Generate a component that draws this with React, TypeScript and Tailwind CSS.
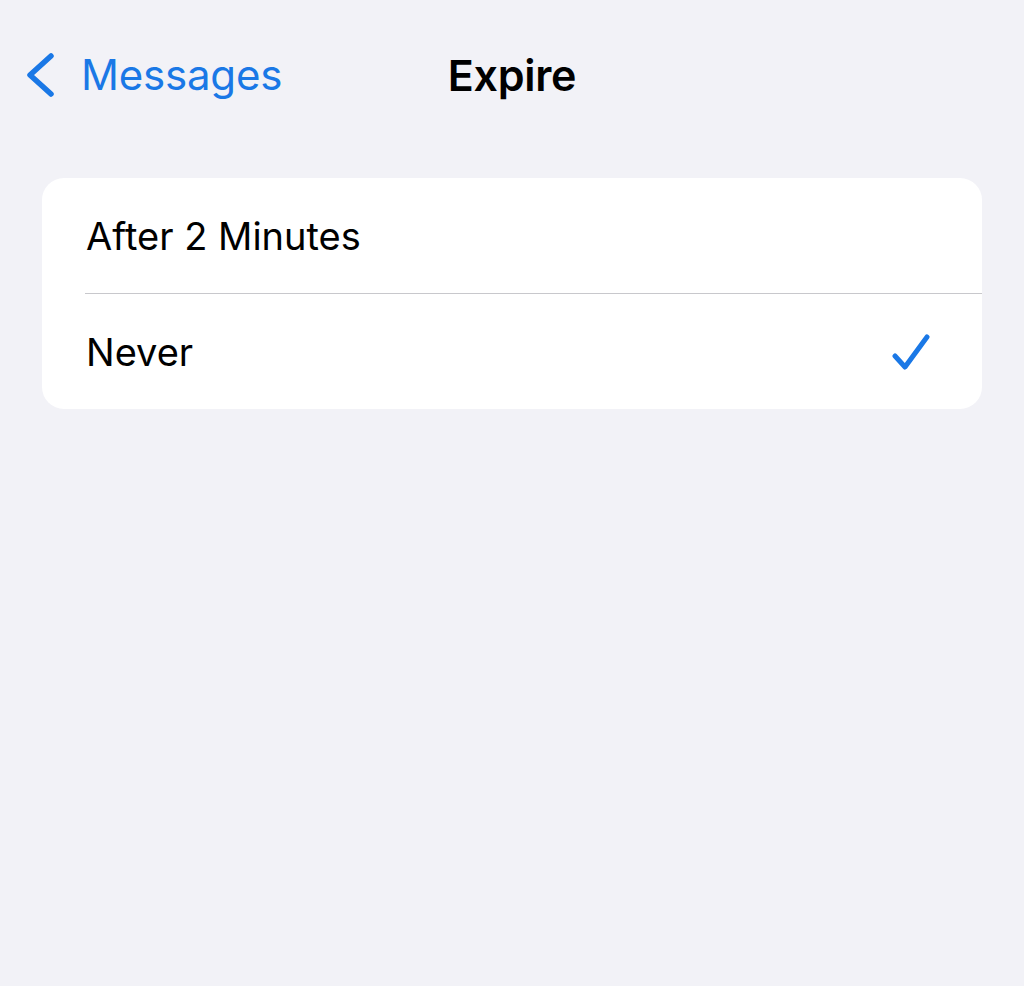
import { useState } from "react";

const options = ["After 2 Minutes", "Never"];

export default function App() {
  const [selected, setSelected] = useState("Never");

  return (
    <div className="min-h-[986px] w-full bg-[#f2f2f7] font-['Inter',sans-serif] text-black">
      <header className="relative flex h-[150px] items-center">
        <button className="flex items-center gap-[26px] pl-[25px] text-[#1a78e6]">
          <svg width="30" height="44" viewBox="0 0 30 44" fill="none">
            <path
              d="M26 3 L5 22 L26 41"
              stroke="currentColor"
              strokeWidth="5.5"
              strokeLinecap="round"
              strokeLinejoin="round"
            />
          </svg>
          <span className="text-[42px] leading-none tracking-[-0.2px]">Messages</span>
        </button>
        <h1 className="absolute left-1/2 -translate-x-1/2 text-[43px] font-semibold leading-none tracking-[-0.3px]">
          Expire
        </h1>
      </header>

      <div className="mx-[42px] mt-[28px] overflow-hidden rounded-[22px] bg-white">
        {options.map((label, i) => (
          <button
            key={label}
            onClick={() => setSelected(label)}
            className="flex w-full flex-col items-stretch pl-[43px] text-left"
          >
            {i > 0 && <div className="h-px bg-[#c8c8cc]" />}
            <div className="flex h-[115px] items-center justify-between pr-[52px]">
              <span className="pl-px text-[38px] leading-none tracking-[0px]">{label}</span>
              {selected === label && (
                <svg width="38" height="36" viewBox="0 0 38 36" fill="none" className="text-[#1a78e6]">
                  <path
                    d="M3 22 L13 33 L35 3"
                    stroke="currentColor"
                    strokeWidth="5"
                    strokeLinecap="round"
                    strokeLinejoin="round"
                  />
                </svg>
              )}
            </div>
          </button>
        ))}
      </div>
    </div>
  );
}
